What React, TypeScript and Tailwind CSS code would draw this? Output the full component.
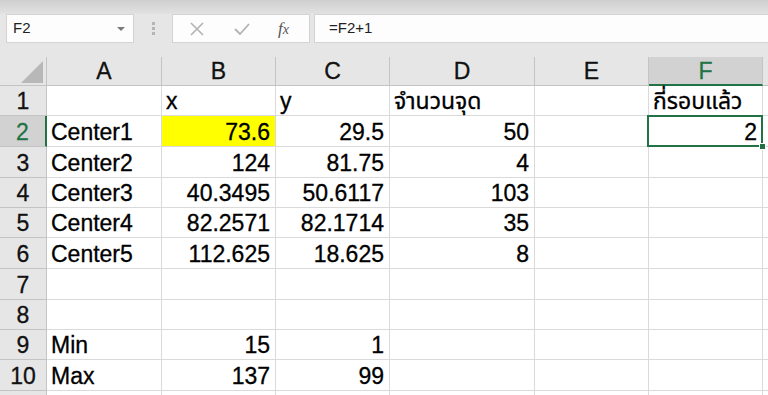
import React from "react";

type Cell = { v: string; align?: "l" | "r"; bg?: string };

const rows: { n: number; label: string; h: string; cells: Cell[] }[] = [
  { n: 1, label: "1", h: "h-[30px]", cells: [{ v: "" }, { v: "x" }, { v: "y" }, { v: "จำนวนจุด" }, { v: "" }, { v: "กี่รอบแล้ว" }] },
  { n: 2, label: "2", h: "h-[31px]", cells: [{ v: "Center1" }, { v: "73.6", align: "r", bg: "yellow" }, { v: "29.5", align: "r" }, { v: "50", align: "r" }, { v: "" }, { v: "2", align: "r" }] },
  { n: 3, label: "3", h: "h-[31px]", cells: [{ v: "Center2" }, { v: "124", align: "r" }, { v: "81.75", align: "r" }, { v: "4", align: "r" }, { v: "" }, { v: "" }] },
  { n: 4, label: "4", h: "h-[30px]", cells: [{ v: "Center3" }, { v: "40.3495", align: "r" }, { v: "50.6117", align: "r" }, { v: "103", align: "r" }, { v: "" }, { v: "" }] },
  { n: 5, label: "5", h: "h-[30px]", cells: [{ v: "Center4" }, { v: "82.2571", align: "r" }, { v: "82.1714", align: "r" }, { v: "35", align: "r" }, { v: "" }, { v: "" }] },
  { n: 6, label: "6", h: "h-[31px]", cells: [{ v: "Center5" }, { v: "112.625", align: "r" }, { v: "18.625", align: "r" }, { v: "8", align: "r" }, { v: "" }, { v: "" }] },
  { n: 7, label: "7", h: "h-[31px]", cells: [{ v: "" }, { v: "" }, { v: "" }, { v: "" }, { v: "" }, { v: "" }] },
  { n: 8, label: "8", h: "h-[30px]", cells: [{ v: "" }, { v: "" }, { v: "" }, { v: "" }, { v: "" }, { v: "" }] },
  { n: 9, label: "9", h: "h-[30px]", cells: [{ v: "Min" }, { v: "15", align: "r" }, { v: "1", align: "r" }, { v: "" }, { v: "" }, { v: "" }] },
  { n: 10, label: "10", h: "h-[31px]", cells: [{ v: "Max" }, { v: "137", align: "r" }, { v: "99", align: "r" }, { v: "" }, { v: "" }, { v: "" }] },
  { n: 11, label: "", h: "h-[31px]", cells: [{ v: "" }, { v: "" }, { v: "" }, { v: "" }, { v: "" }, { v: "" }] },
];

const colW = ["w-[115px]", "w-[114px]", "w-[114px]", "w-[145px]", "w-[114px]", "w-[114px]"];
const letters = ["A", "B", "C", "D", "E", "F"];

export default function App() {
  return (
    <div className="w-[768px] h-[395px] overflow-hidden bg-[#e6e6e6] font-['Liberation_Sans','Noto_Sans_Thai','Noto_Sans',sans-serif] text-[#000]">
      {/* top band */}
      <div className="h-[14px] bg-gradient-to-b from-[#cfcfcf] to-[#e2e2e2]" />
      {/* formula bar */}
      <div className="flex h-[29px] items-stretch">
        <div className="ml-[6px] w-[128px] border border-[#d3d3d3] bg-[#fdfdfd] flex items-center justify-between pl-[6px] pr-[8px]">
          <span className="text-[15px] text-[#222]">F2</span>
          <svg width="8" height="4" viewBox="0 0 8 4"><path d="M0 0h8L4 4z" fill="#7a7a7a" /></svg>
        </div>
        <div className="w-[38px] flex flex-col items-center justify-center gap-[2px]">
          <div className="w-[3px] h-[3px] bg-[#b5b5b5]" />
          <div className="w-[3px] h-[3px] bg-[#b5b5b5]" />
          <div className="w-[3px] h-[3px] bg-[#b5b5b5]" />
        </div>
        <div className="w-[138px] border border-[#d3d3d3] bg-[#fdfdfd] flex items-center">
          <svg className="ml-[17px]" width="14" height="14" viewBox="0 0 14 14"><path d="M1 1L13 13M13 1L1 13" stroke="#b3b3b3" strokeWidth="1.6" /></svg>
          <svg className="ml-[30px]" width="16" height="12" viewBox="0 0 16 12"><path d="M1 6L6 11L15 1" stroke="#b3b3b3" strokeWidth="1.8" fill="none" /></svg>
          <span className="ml-[28px] font-['Liberation_Serif',serif] italic text-[17px] text-[#555] leading-none">f<span className="text-[14px]">x</span></span>
        </div>
        <div className="ml-[4px] flex-1 border border-[#d3d3d3] border-r-0 bg-[#fdfdfd] flex items-center pl-[14px]">
          <span className="text-[15px] text-[#222]">=F2+1</span>
        </div>
      </div>
      <div className="h-[14px]" />
      {/* sheet */}
      <div className="flex flex-col [-webkit-text-stroke:0.3px_currentColor]">
        {/* column headers */}
        <div className="flex h-[29px]">
          <div className="w-[47px] shrink-0 border-r border-b border-[#c4c4c4] flex items-end justify-end pr-[3px] pb-[2px]">
            <svg width="22" height="22" viewBox="0 0 22 22"><path d="M22 0V22H0z" fill="#b8b8b8" /></svg>
          </div>
          {letters.map((l, i) => {
            const sel = l === "F";
            return (
              <div
                key={l}
                className={`${colW[i]} shrink-0 border-r border-[#c4c4c4] flex items-end justify-center text-[23px] leading-none ${
                  sel ? "bg-[#d2d2d2] text-[#217346] border-b-2 border-b-[#217346] pb-[1px]" : "border-b border-b-[#c4c4c4] text-[#111] pb-[2px]"
                }`}
              >
                {l}
              </div>
            );
          })}
          <div className="flex-1 border-b border-[#c4c4c4]" />
        </div>
        {rows.map((r) => {
          const selRow = r.n === 2;
          return (
            <div key={r.n} className={`flex ${r.h}`}>
              <div
                className={`w-[47px] shrink-0 border-b border-[#c4c4c4] flex items-end justify-center text-[23px] leading-none pb-[2px] ${
                  selRow ? "bg-[#d2d2d2] text-[#217346] border-r-2 border-r-[#217346]" : "border-r text-[#111]"
                }`}
              >
                {r.label}
              </div>
              {r.cells.map((c, i) => {
                const isSel = r.n === 2 && i === 5;
                return (
                  <div
                    key={i}
                    className={`${colW[i]} shrink-0 relative border-r border-b border-[#dadada] flex items-end text-[23px] leading-none pb-[2px] whitespace-nowrap ${
                      c.align === "r" ? "justify-end pr-[5px]" : "justify-start pl-[4px]"
                    } ${c.bg === "yellow" ? "bg-[#ffff00]" : "bg-white"}`}
                  >
                    {c.v}
                    {isSel && (
                      <>
                        <div className="absolute z-10 -left-[2px] -top-[1px] -right-[1px] -bottom-[1px] border-2 border-[#217346] pointer-events-none" />
                        <div className="absolute z-20 -right-[4px] -bottom-[4px] w-[7px] h-[7px] bg-[#217346] border border-white" />
                      </>
                    )}
                  </div>
                );
              })}
              <div className="flex-1 bg-white border-b border-[#dadada]" />
            </div>
          );
        })}
      </div>
    </div>
  );
}
